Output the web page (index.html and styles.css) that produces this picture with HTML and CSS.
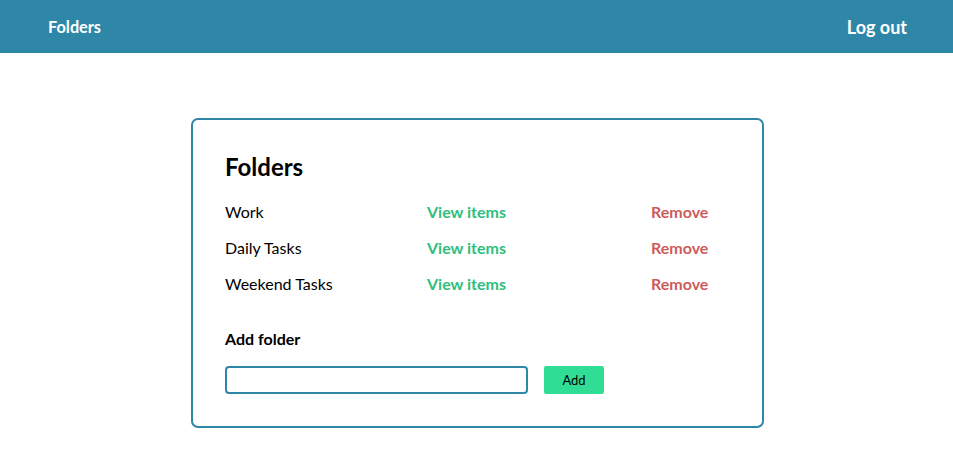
FILE: index.html
```html
<!DOCTYPE html>
<html>
<head>
<meta charset="utf-8">
<link rel="stylesheet" href="styles.css">
</head>
<body>
<header class="topbar">
  <span class="brand">Folders</span>
  <span class="logout">Log out</span>
</header>
<main class="main">
  <section class="card">
    <h1 class="title">Folders</h1>
    <ul class="folders">
      <li class="row"><span class="name">Work</span><a class="view">View items</a><a class="remove">Remove</a></li>
      <li class="row"><span class="name">Daily Tasks</span><a class="view">View items</a><a class="remove">Remove</a></li>
      <li class="row"><span class="name">Weekend Tasks</span><a class="view">View items</a><a class="remove">Remove</a></li>
    </ul>
    <h2 class="subtitle">Add folder</h2>
    <form class="add-form">
      <input class="field" type="text">
      <button class="add-btn" type="button">Add</button>
    </form>
  </section>
</main>
</body>
</html>
```
FILE: styles.css
```css
* { box-sizing: border-box; }
html, body { margin: 0; padding: 0; background: #fff; }
body { font-family: Lato, "Open Sans", sans-serif; color: #000; }
.topbar {
  height: 53px;
  background: #2f87a8;
  display: flex;
  align-items: center;
  justify-content: space-between;
  padding: 0 46px 0 48px;
  color: #fff;
  font-weight: 700;
}
.brand { font-size: 16.3px; }
.logout { font-size: 18px; }
.main {
  display: flex;
  justify-content: center;
  padding-top: 65px;
  padding-left: 2px;
}
.card {
  width: 573px;
  height: 310px;
  border: 2px solid #2f87a8;
  border-radius: 7px;
  padding: 31px 33px 0 32px;
}
.title {
  margin: 0;
  font-size: 24px;
  font-weight: 700;
  line-height: 32px;
}
.folders {
  list-style: none;
  margin: 10px 0 0 0;
  padding: 0;
}
.row {
  display: grid;
  grid-template-columns: 202px 224px auto;
  height: 36px;
  align-items: center;
  font-size: 16px;
}
.view { color: #2dbf7b; font-weight: 700; }
.remove { color: #cd5c5c; font-weight: 700; }
.subtitle {
  margin: 28px 0 0 0;
  font-size: 16px;
  font-weight: 700;
  line-height: 20px;
}
.add-form {
  display: flex;
  gap: 16px;
  margin-top: 17px;
}
.field {
  width: 303px;
  height: 28px;
  border: 2px solid #2f87a8;
  border-radius: 4px;
  padding: 0 6px;
  font: inherit;
}
.add-btn {
  width: 60px;
  height: 28px;
  border: none;
  border-radius: 2px;
  background: #2fde94;
  color: #000;
  font-family: Lato, sans-serif;
  font-size: 13px;
}
```
